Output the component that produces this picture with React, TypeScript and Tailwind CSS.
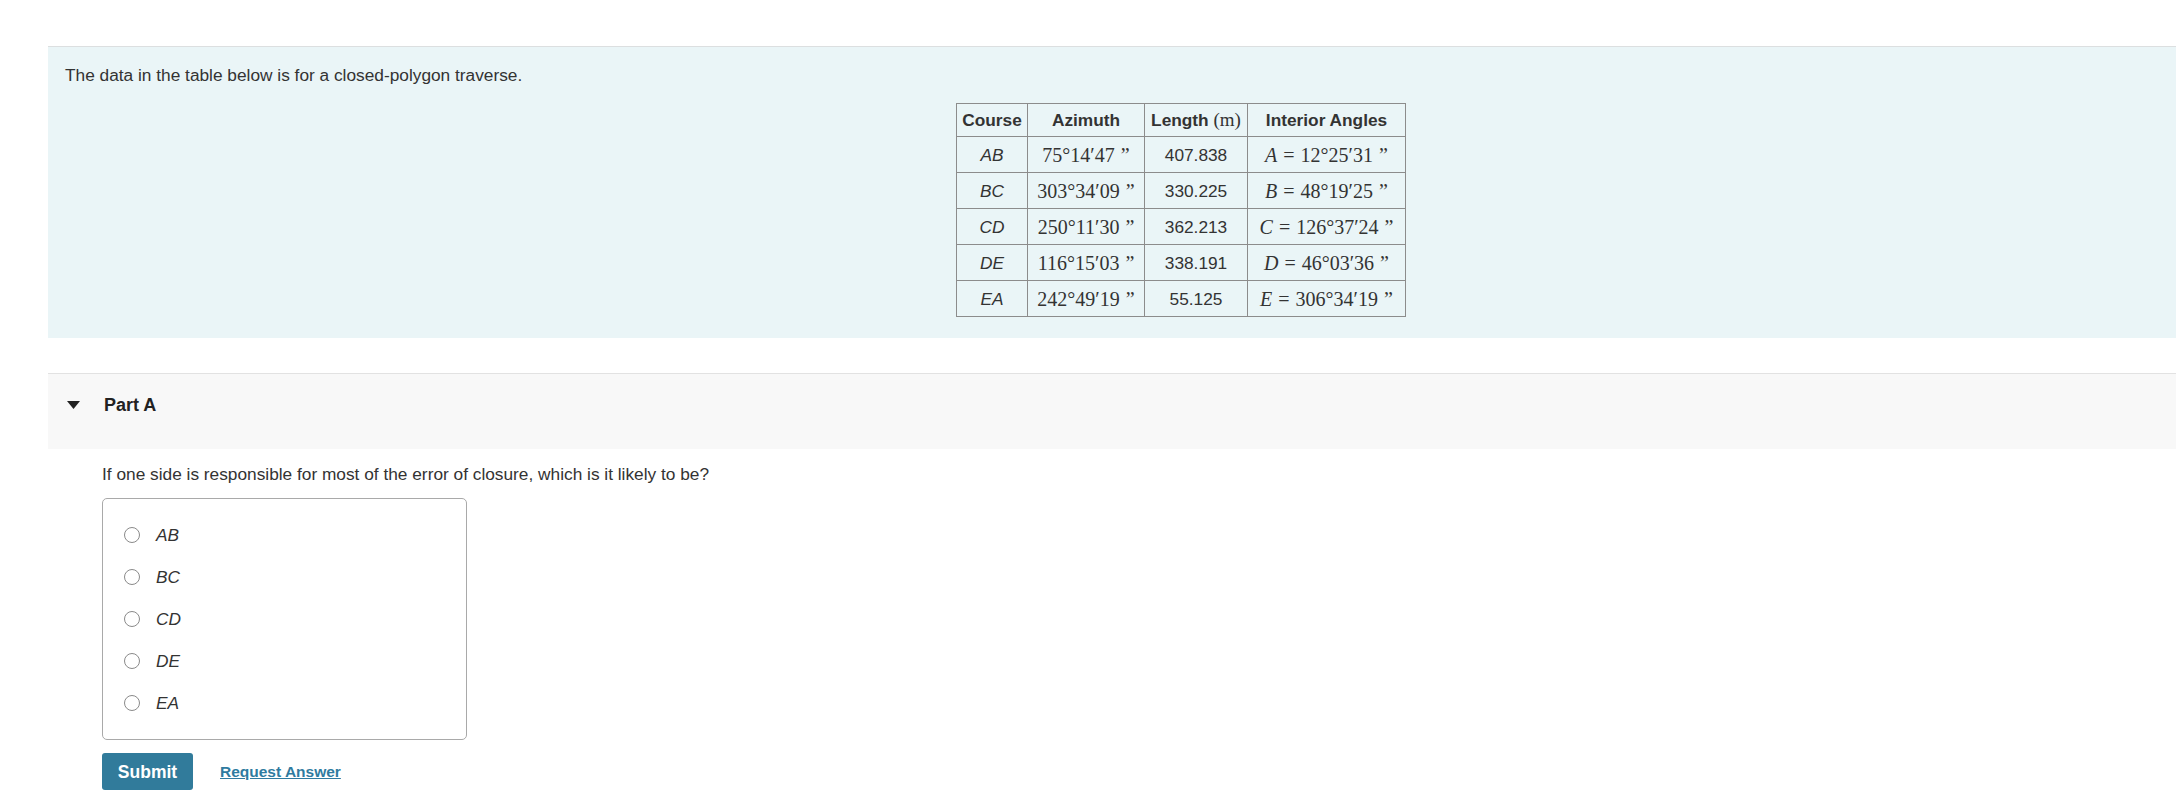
import React from "react";

type Row = {
  course: string;
  az: [string, string, string];
  len: string;
  angle: string;
  ang: [string, string, string];
};

const rows: Row[] = [
  { course: "AB", az: ["75", "14", "47"], len: "407.838", angle: "A", ang: ["12", "25", "31"] },
  { course: "BC", az: ["303", "34", "09"], len: "330.225", angle: "B", ang: ["48", "19", "25"] },
  { course: "CD", az: ["250", "11", "30"], len: "362.213", angle: "C", ang: ["126", "37", "24"] },
  { course: "DE", az: ["116", "15", "03"], len: "338.191", angle: "D", ang: ["46", "03", "36"] },
  { course: "EA", az: ["242", "49", "19"], len: "55.125", angle: "E", ang: ["306", "34", "19"] },
];

const options = ["AB", "BC", "CD", "DE", "EA"];

const serif = "font-['Liberation_Serif','DejaVu_Serif',serif]";

const Dms = ({ v }: { v: [string, string, string] }) => (
  <span className="whitespace-nowrap">
    {v[0]}°{v[1]}′{v[2]}
    <span className="ml-[6px]">”</span>
  </span>
);

const App = () => {
  return (
    <div className="min-h-[811px] w-full bg-white font-['Liberation_Sans',Arial,sans-serif] text-[17.3px] leading-[24px] text-[#333]">
      <div className="h-[46px]" />

      {/* intro panel */}
      <div className="ml-[48px] border-t border-[#dcdfe0] bg-[#eaf5f7] pl-[17px] pt-[16px] pb-[21px]">
        <p>The data in the table below is for a closed-polygon traverse.</p>
        <table className="mt-[16px] ml-[891px] table-fixed border-collapse border border-[#8c8c8c]">
          <thead>
            <tr className="h-[33px]">
              <th className="w-[71px] border border-[#8c8c8c] p-0 text-center font-bold">Course</th>
              <th className="w-[117px] border border-[#8c8c8c] p-0 text-center font-bold">Azimuth</th>
              <th className="w-[103px] border border-[#8c8c8c] p-0 text-center font-bold whitespace-nowrap">
                Length <span className={`${serif} font-normal text-[19px]`}>(m)</span>
              </th>
              <th className="w-[158px] border border-[#8c8c8c] p-0 text-center font-bold">Interior Angles</th>
            </tr>
          </thead>
          <tbody>
            {rows.map((r) => (
              <tr key={r.course} className="h-[36px]">
                <td className="border border-[#8c8c8c] p-0 text-center italic">{r.course}</td>
                <td className={`border border-[#8c8c8c] p-0 text-center text-[20px] ${serif}`}>
                  <Dms v={r.az} />
                </td>
                <td className="border border-[#8c8c8c] p-0 text-center">{r.len}</td>
                <td className={`border border-[#8c8c8c] p-0 text-center text-[20px] ${serif}`}>
                  <span className="italic">{r.angle}</span>
                  <span className="mx-[6px]">=</span>
                  <Dms v={r.ang} />
                </td>
              </tr>
            ))}
          </tbody>
        </table>
      </div>

      <div className="h-[35px]" />

      {/* Part A header */}
      <div className="ml-[48px] h-[76px] border-t border-[#e2e2e2] bg-[#f8f8f8] pt-[19px]">
        <div className="flex items-center">
          <svg className="ml-[19px]" width="13" height="8" viewBox="0 0 13 8">
            <polygon points="0,0 13,0 6.5,8" fill="#222" />
          </svg>
          <span className="ml-[24px] text-[18px] font-bold text-[#222]">Part A</span>
        </div>
      </div>

      {/* question */}
      <div className="ml-[102px] pt-[13px]">
        <p>If one side is responsible for most of the error of closure, which is it likely to be?</p>

        <div className="mt-[12px] w-[365px] rounded-[5px] border border-[#a9a9a9] py-[15px]">
          {options.map((o) => (
            <label key={o} className="flex h-[42px] items-center pl-[21px]">
              <span className="h-[16px] w-[16px] rounded-full border border-[#8a8a8a] bg-white" />
              <span className="ml-[16px] italic">{o}</span>
            </label>
          ))}
        </div>

        <div className="mt-[13px] flex items-center">
          <button className="h-[37px] w-[91px] rounded-[3px] bg-[#317b9b] text-[17.5px] font-bold text-white">
            Submit
          </button>
          <a className="ml-[27px] text-[15.5px] font-bold text-[#2f7ba0] underline">Request Answer</a>
        </div>
      </div>
    </div>
  );
};

export default App;
